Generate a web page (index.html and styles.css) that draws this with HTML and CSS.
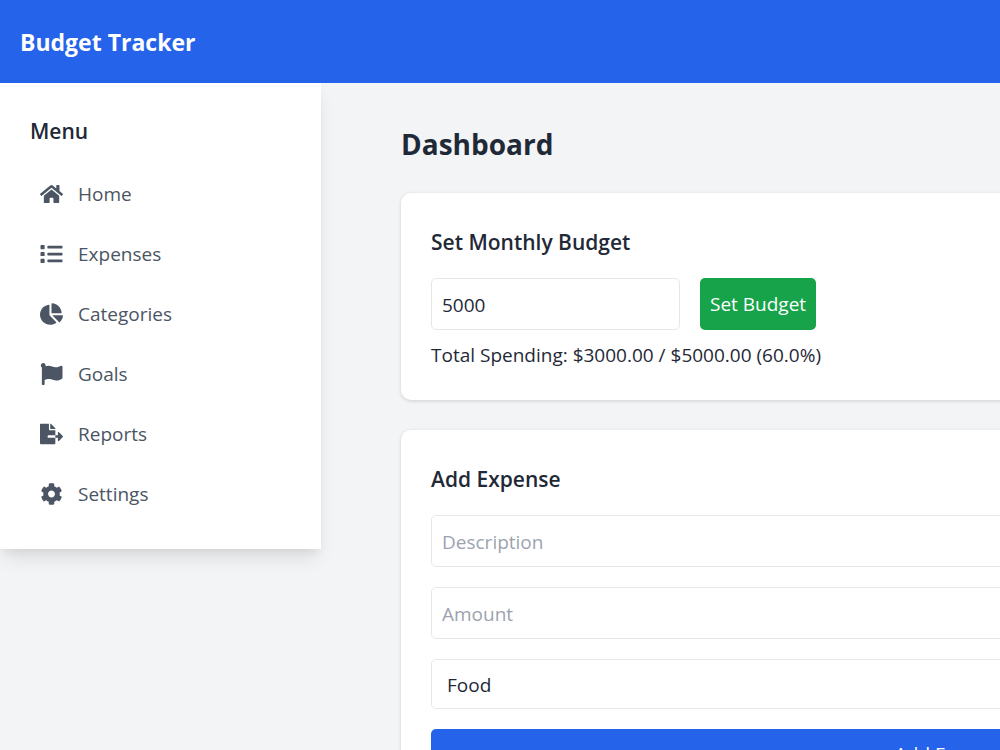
FILE: index.html
```html
<!DOCTYPE html>
<html lang="en">
<head>
  <meta charset="UTF-8">
  <meta name="viewport" content="width=device-width, initial-scale=1.0">
  <title>Budget Tracker</title>
  <link rel="stylesheet" href="styles.css">
</head>
<body>
  <header class="header">
    <h1 class="brand">Budget Tracker</h1>
  </header>

  <div class="layout">
    <aside class="sidebar">
      <h2 class="section-title">Menu</h2>
      <nav>
        <ul class="menu">
          <li>
            <a href="#home" class="menu-link">
              <svg class="icon" viewBox="0 0 576 512" aria-hidden="true"><path d="M280.37 148.26L96 300.11V464a16 16 0 0 0 16 16l112.06-.29a16 16 0 0 0 15.92-16V368a16 16 0 0 1 16-16h64a16 16 0 0 1 16 16v95.64a16 16 0 0 0 16 16.05L464 480a16 16 0 0 0 16-16V300L295.67 148.26a12.19 12.19 0 0 0-15.3 0zM571.6 251.47L488 182.56V44.05a12 12 0 0 0-12-12h-56a12 12 0 0 0-12 12v72.61L318.47 43a48 48 0 0 0-61 0L4.34 251.47a12 12 0 0 0-1.6 16.9l25.5 31A12 12 0 0 0 45.15 301l235.22-193.74a12.19 12.19 0 0 1 15.3 0L530.9 301a12 12 0 0 0 16.9-1.6l25.5-31a12 12 0 0 0-1.7-16.93z"/></svg>
              <span>Home</span>
            </a>
          </li>
          <li>
            <a href="#expenses" class="menu-link">
              <svg class="icon" viewBox="0 0 512 512" aria-hidden="true"><path d="M80 368H16a16 16 0 0 0-16 16v64a16 16 0 0 0 16 16h64a16 16 0 0 0 16-16v-64a16 16 0 0 0-16-16zm0-320H16A16 16 0 0 0 0 64v64a16 16 0 0 0 16 16h64a16 16 0 0 0 16-16V64a16 16 0 0 0-16-16zm0 160H16a16 16 0 0 0-16 16v64a16 16 0 0 0 16 16h64a16 16 0 0 0 16-16v-64a16 16 0 0 0-16-16zm416 176H176a16 16 0 0 0-16 16v32a16 16 0 0 0 16 16h320a16 16 0 0 0 16-16v-32a16 16 0 0 0-16-16zm0-320H176a16 16 0 0 0-16 16v32a16 16 0 0 0 16 16h320a16 16 0 0 0 16-16V80a16 16 0 0 0-16-16zm0 160H176a16 16 0 0 0-16 16v32a16 16 0 0 0 16 16h320a16 16 0 0 0 16-16v-32a16 16 0 0 0-16-16z"/></svg>
              <span>Expenses</span>
            </a>
          </li>
          <li>
            <a href="#categories" class="menu-link">
              <svg class="icon" viewBox="0 0 544 512" aria-hidden="true"><path d="M527.79 288H290.5l158.03 158.03c6.04 6.04 15.98 6.53 22.19.68 38.7-36.46 65.32-85.61 73.13-140.86 1.34-9.46-6.51-17.85-16.06-17.85zm-15.83-64.8C503.72 103.74 408.26 8.28 288.8.04 279.68-.59 272 7.1 272 16.24V240h223.77c9.14 0 16.82-7.68 16.19-16.8zM224 288V50.71c0-9.55-8.39-17.4-17.84-16.06C86.99 51.49-4.1 155.6.14 280.37 4.5 408.51 114.83 513.59 243.03 511.98c50.4-.63 96.97-16.87 135.26-44.03 7.9-5.6 8.42-17.23 1.57-24.08L224 288z"/></svg>
              <span>Categories</span>
            </a>
          </li>
          <li>
            <a href="#goals" class="menu-link">
              <svg class="icon" viewBox="0 0 512 512" aria-hidden="true"><path d="M349.565 98.783C295.978 98.783 251.721 64 184.348 64c-24.955 0-47.309 4.384-68.045 12.013a55.947 55.947 0 0 0 3.586-23.562C118.117 24.015 94.806 1.206 66.338.048 34.345-1.254 8 24.296 8 56c0 19.026 9.497 35.825 24 45.945V488c0 13.255 10.745 24 24 24h16c13.255 0 24-10.745 24-24v-94.4c28.311-12.064 63.582-22.122 114.435-22.122 53.588 0 97.844 34.783 165.217 34.783 48.169 0 86.667-16.294 122.505-40.858C506.84 359.452 512 349.571 512 339.045v-243.1c0-23.393-24.269-38.87-45.485-29.016-34.338 15.948-76.454 31.854-116.95 31.854z"/></svg>
              <span>Goals</span>
            </a>
          </li>
          <li>
            <a href="#reports" class="menu-link">
              <svg class="icon" viewBox="0 0 576 512" aria-hidden="true"><path d="M384 121.9c0-6.3-2.5-12.4-7-16.9L279.1 7c-4.5-4.5-10.6-7-17-7H256v128h128zM571 308l-95.7-96.4c-10.1-10.1-27.4-3-27.4 11.3V288h-64v64h64v65.2c0 14.3 17.3 21.4 27.4 11.3L571 332c6.6-6.6 6.6-17.4 0-24zm-379 28v-32c0-8.8 7.2-16 16-16h176V160H248c-13.2 0-24-10.8-24-24V0H24C10.7 0 0 10.7 0 24v464c0 13.3 10.7 24 24 24h336c13.3 0 24-10.7 24-24V352H208c-8.8 0-16-7.2-16-16z"/></svg>
              <span>Reports</span>
            </a>
          </li>
          <li>
            <a href="#settings" class="menu-link">
              <svg class="icon" viewBox="0 0 512 512" aria-hidden="true"><path d="M487.4 315.7l-42.6-24.6c4.3-23.2 4.3-47 0-70.2l42.6-24.6c4.9-2.8 7.1-8.6 5.5-14-11.1-35.6-30-67.8-54.7-94.6-3.8-4.1-10-5.1-14.8-2.3L380.8 110c-17.9-15.4-38.5-27.3-60.8-35.1V25.8c0-5.6-3.9-10.5-9.4-11.7-36.7-8.2-74.3-7.8-109.2 0-5.5 1.2-9.4 6.1-9.4 11.7V75c-22.2 7.9-42.8 19.8-60.8 35.1L88.7 85.5c-4.9-2.8-11-1.9-14.8 2.3-24.7 26.7-43.6 58.9-54.7 94.6-1.7 5.4.6 11.2 5.5 14L67.3 221c-4.3 23.2-4.3 47 0 70.2l-42.6 24.6c-4.9 2.8-7.1 8.6-5.5 14 11.1 35.6 30 67.8 54.7 94.6 3.8 4.1 10 5.1 14.8 2.3l42.6-24.6c17.9 15.4 38.5 27.3 60.8 35.1v49.2c0 5.6 3.9 10.5 9.4 11.7 36.7 8.2 74.3 7.8 109.2 0 5.5-1.2 9.4-6.1 9.4-11.7v-49.2c22.2-7.9 42.8-19.8 60.8-35.1l42.6 24.6c4.9 2.8 11 1.9 14.8-2.3 24.7-26.7 43.6-58.9 54.7-94.6 1.5-5.5-.7-11.3-5.6-14.1zM256 336c-44.1 0-80-35.9-80-80s35.9-80 80-80 80 35.9 80 80-35.9 80-80 80z"/></svg>
              <span>Settings</span>
            </a>
          </li>
        </ul>
      </nav>
    </aside>

    <main class="main">
      <h2 class="page-title">Dashboard</h2>

      <section class="card">
        <h3 class="section-title">Set Monthly Budget</h3>
        <form class="budget-form" id="budgetForm">
          <input class="field budget-input" type="text" inputmode="numeric" value="5000" aria-label="Monthly budget">
          <button class="btn btn-green" type="submit">Set Budget</button>
        </form>
        <p class="spending">Total Spending: $3000.00 / $5000.00 (60.0%)</p>
      </section>

      <section class="card">
        <h3 class="section-title">Add Expense</h3>
        <form class="expense-form" id="expenseForm">
          <input class="field" type="text" placeholder="Description" aria-label="Description">
          <input class="field" type="text" inputmode="decimal" placeholder="Amount" aria-label="Amount">
          <select class="field select" aria-label="Category">
            <option>Food</option>
          </select>
          <button class="btn btn-blue" type="submit">Add Expense</button>
        </form>
      </section>
    </main>
  </div>
</body>
</html>
```

FILE: styles.css
```css
* {
  box-sizing: border-box;
  margin: 0;
  padding: 0;
}
body {
  font-family: 'Segoe UI', 'Open Sans', sans-serif;
  font-size: 19px;
  line-height: 30px;
  background: #f3f4f6;
  color: #1f2937;
  min-height: 100vh;
  overflow-x: hidden;
}
.header {
  background: #2563eb;
  color: #fff;
  padding: 20px 20px 18px;
}
.brand {
  font-size: 23px;
  font-weight: 700;
  line-height: 45px;
}
.layout {
  display: flex;
  align-items: flex-start;
}
.sidebar {
  flex: 0 0 321px;
  background: #fff;
  padding: 30px;
  box-shadow: 0 12px 18px -4px rgba(0, 0, 0, 0.1), 0 5px 8px -2px rgba(0, 0, 0, 0.05);
}
.section-title {
  font-size: 21px;
  font-weight: 600;
  line-height: 36px;
  margin-bottom: 20px;
}
.menu {
  list-style: none;
  display: flex;
  flex-direction: column;
  gap: 10px;
}
.menu-link {
  display: flex;
  align-items: center;
  gap: 15px;
  padding: 10px;
  border-radius: 5px;
  color: #4b5563;
  text-decoration: none;
}
.menu-link:hover {
  background: #e5e7eb;
}
.icon {
  width: 23px;
  height: 22px;
  fill: currentColor;
}
.main {
  flex: 1 0 auto;
  min-width: 1222px;
  padding: 40px 40px 40px 80px;
}
.page-title {
  font-size: 28px;
  font-weight: 700;
  line-height: 42px;
  margin-bottom: 28px;
}
.card {
  background: #fff;
  border-radius: 10px;
  padding: 30px;
  margin-bottom: 30px;
  box-shadow: 0 1px 4px rgba(0, 0, 0, 0.1), 0 1px 3px rgba(0, 0, 0, 0.06);
}
.card .section-title {
  line-height: 38px;
  margin-bottom: 17px;
}
.budget-form {
  display: flex;
  gap: 20px;
}
.field {
  font: inherit;
  color: inherit;
  width: 100%;
  height: 52px;
  padding: 12px 10px 10px;
  background: #fff;
  border: 1px solid #e5e7eb;
  border-radius: 5px;
}
.field::placeholder {
  color: #9ca3af;
  opacity: 1;
}
.budget-input {
  width: 249px;
}
.select {
  appearance: none;
  height: 50px;
  padding: 2px 15px 0;
}
.btn {
  font: inherit;
  color: #fff;
  padding: 10px;
  border: none;
  border-radius: 5px;
  cursor: pointer;
}
.btn-green {
  background: #16a34a;
}
.btn-blue {
  background: #2563eb;
}
.spending {
  margin-top: 10px;
}
.expense-form {
  display: flex;
  flex-direction: column;
  gap: 20px;
}
```
